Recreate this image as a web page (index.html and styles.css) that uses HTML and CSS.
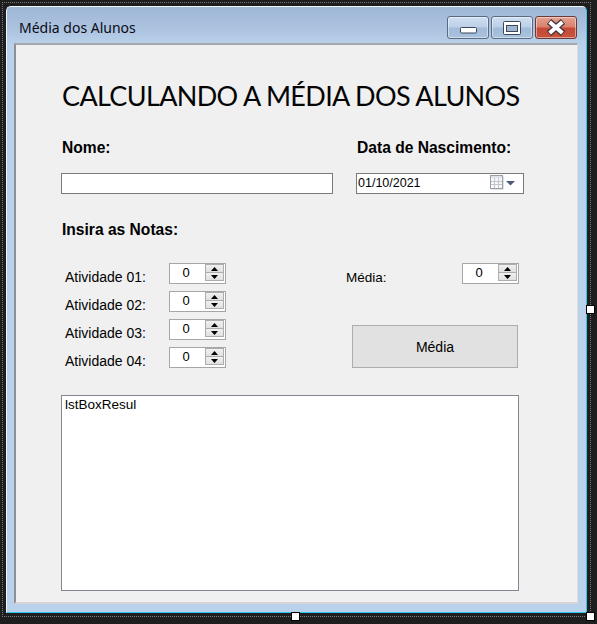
FILE: index.html
```html
<!DOCTYPE html>
<html lang="pt-BR">
<head>
<meta charset="utf-8">
<title>Média dos Alunos</title>
<link rel="stylesheet" href="styles.css">
</head>
<body>
<div class="designer">
  <div class="dotted"></div>
  <div class="window">
    <div class="titlebar">
      <span class="title">Média dos Alunos</span>
      <div class="caption-buttons">
        <div class="cap cap-min">
          <svg class="glyph-min" width="17" height="7" viewBox="0 0 17 7"><rect x="0.5" y="0.5" width="16" height="5.5" rx="1" fill="#fff" stroke="#3b4759"/></svg>
        </div>
        <div class="cap cap-max">
          <svg class="glyph-max" width="18" height="14" viewBox="0 0 18 14"><rect x="0.5" y="0.5" width="17" height="13" rx="1" fill="#fff" stroke="#3b4759"/><rect x="3.5" y="4.5" width="11" height="6" fill="#9fb6d2" stroke="#3b4759"/></svg>
        </div>
        <div class="cap cap-close">
          <svg class="glyph-close" width="20" height="17" viewBox="0 0 20 17"><g stroke="#40333a" stroke-width="6.5"><line x1="3" y1="2.5" x2="17" y2="14.5"/><line x1="17" y1="2.5" x2="3" y2="14.5"/></g><g stroke="#fff" stroke-width="4"><line x1="3.6" y1="3" x2="16.4" y2="14"/><line x1="16.4" y1="3" x2="3.6" y2="14"/></g></svg>
        </div>
      </div>
    </div>
    <div class="client">
      <h1 class="heading">CALCULANDO A MÉDIA DOS ALUNOS</h1>
      <div class="info-row">
        <div class="field">
          <div class="lbl-bold">Nome:</div>
          <div class="textbox"></div>
        </div>
        <div class="field">
          <div class="lbl-bold">Data de Nascimento:</div>
          <div class="datepicker">
            <span class="date-text">01/10/2021</span>
            <svg class="cal-icon" width="14" height="15" viewBox="0 0 14 15">
              <rect x="1.5" y="1.5" width="12" height="13" fill="#bfc3c9"/>
              <rect x="0.5" y="0.5" width="12" height="13" fill="#f7f7f7" stroke="#9a9ea6"/>
              <rect x="1" y="1" width="11" height="2" fill="#dfe3ea"/>
              <g stroke="#c3c6cc"><line x1="4.5" y1="3" x2="4.5" y2="13"/><line x1="8.5" y1="3" x2="8.5" y2="13"/><line x1="1" y1="6.5" x2="12" y2="6.5"/><line x1="1" y1="9.5" x2="12" y2="9.5"/></g>
            </svg>
            <svg class="dd-arrow" width="9" height="5" viewBox="0 0 9 5"><polygon points="0,0 9,0 4.5,4.5" fill="#4b5a76"/></svg>
          </div>
        </div>
      </div>
      <div class="lbl-bold notes-title">Insira as Notas:</div>
      <div class="notes">
        <div class="activities">
          <div class="act-row"><span class="lbl">Atividade 01:</span>
            <div class="spinner"><span class="spin-val">0</span><div class="spin-btns"><div class="spin-btn up"><svg width="7" height="4" viewBox="0 0 7 4"><polygon points="3.5,0 7,4 0,4" fill="#000"/></svg></div><div class="spin-btn down"><svg width="7" height="4" viewBox="0 0 7 4"><polygon points="0,0 7,0 3.5,4" fill="#000"/></svg></div></div></div>
          </div>
          <div class="act-row"><span class="lbl">Atividade 02:</span>
            <div class="spinner"><span class="spin-val">0</span><div class="spin-btns"><div class="spin-btn up"><svg width="7" height="4" viewBox="0 0 7 4"><polygon points="3.5,0 7,4 0,4" fill="#000"/></svg></div><div class="spin-btn down"><svg width="7" height="4" viewBox="0 0 7 4"><polygon points="0,0 7,0 3.5,4" fill="#000"/></svg></div></div></div>
          </div>
          <div class="act-row"><span class="lbl">Atividade 03:</span>
            <div class="spinner"><span class="spin-val">0</span><div class="spin-btns"><div class="spin-btn up"><svg width="7" height="4" viewBox="0 0 7 4"><polygon points="3.5,0 7,4 0,4" fill="#000"/></svg></div><div class="spin-btn down"><svg width="7" height="4" viewBox="0 0 7 4"><polygon points="0,0 7,0 3.5,4" fill="#000"/></svg></div></div></div>
          </div>
          <div class="act-row"><span class="lbl">Atividade 04:</span>
            <div class="spinner"><span class="spin-val">0</span><div class="spin-btns"><div class="spin-btn up"><svg width="7" height="4" viewBox="0 0 7 4"><polygon points="3.5,0 7,4 0,4" fill="#000"/></svg></div><div class="spin-btn down"><svg width="7" height="4" viewBox="0 0 7 4"><polygon points="0,0 7,0 3.5,4" fill="#000"/></svg></div></div></div>
          </div>
        </div>
        <div class="result">
          <div class="act-row"><span class="lbl lbl-media">Média:</span>
            <div class="spinner"><span class="spin-val">0</span><div class="spin-btns"><div class="spin-btn up"><svg width="7" height="4" viewBox="0 0 7 4"><polygon points="3.5,0 7,4 0,4" fill="#000"/></svg></div><div class="spin-btn down"><svg width="7" height="4" viewBox="0 0 7 4"><polygon points="0,0 7,0 3.5,4" fill="#000"/></svg></div></div></div>
          </div>
          <div class="btn">Média</div>
        </div>
      </div>
      <div class="listbox">lstBoxResul</div>
    </div>
  </div>
  <div class="handle handle-right"></div>
  <div class="handle handle-bottom"></div>
  <div class="handle handle-corner"></div>
</div>
</body>
</html>
```
FILE: styles.css
```css
* { box-sizing: border-box; }
html, body { margin: 0; padding: 0; }
body {
  width: 597px;
  height: 624px;
  overflow: hidden;
  background: #1e1e1e;
  font-family: "Liberation Sans", Arial, sans-serif;
  color: #000;
}
.designer {
  position: relative;
  width: 597px;
  height: 624px;
  padding: 6px 0 0 6px;
}
.dotted {
  position: absolute;
  left: 2px;
  top: 2px;
  width: 589px;
  height: 615px;
  border: 1px dotted #7a7a7a;
}
.window {
  position: relative;
  width: 581px;
  height: 607px;
  border-top: 1px solid #f2f6fb;
  border-left: 1px solid #f2f6fb;
  border-right: 1px solid #30c6ef;
  border-bottom: 1px solid #30c6ef;
  border-radius: 5px 5px 0 0;
  background: linear-gradient(#9fb8d6 0px, #aac2de 20px, #b9d1ea 38px, #b9d1ea 100%);
  padding: 0 8px 8px 7px;
  display: flex;
  flex-direction: column;
}
.titlebar {
  height: 36px;
  display: flex;
  align-items: flex-start;
  justify-content: space-between;
}
.title {
  font-family: "Noto Sans", "Open Sans", sans-serif;
  font-size: 14px;
  line-height: 20px;
  margin: 11px 0 0 5px;
  color: #0a0a14;
}
.caption-buttons {
  display: flex;
  gap: 2px;
  margin: 9px 1px 0 0;
}
.cap {
  width: 42px;
  height: 23px;
  border: 1px solid #5a6a82;
  border-radius: 3px;
  box-shadow: inset 0 0 0 1px rgba(255,255,255,0.45);
  display: flex;
  justify-content: center;
  background: linear-gradient(#d0dff1 0%, #bcd0e8 48%, #a2bbd8 52%, #a8c1dd 100%);
}
.cap-close {
  border-color: #6a3a36;
  background: linear-gradient(#e4a392 0%, #d9806b 48%, #c44a35 52%, #c9533c 100%);
}
.glyph-min { margin-top: 10px; }
.glyph-max { margin-top: 4px; }
.glyph-close { margin-top: 2px; }

.client {
  width: 564px;
  height: 561px;
  border-top: 2px solid #a5a8ad;
  border-left: 2px solid #8d9096;
  border-right: 1px solid #dedede;
  border-bottom: 2px solid #d4d4d4;
  background: #f0f0f0;
  padding-left: 45px;
}
.heading {
  margin: 34px 0 0 1px;
  font-family: Lato, "Noto Sans", sans-serif;
  font-weight: 400;
  font-size: 27px;
  line-height: 34px;
  letter-spacing: -0.65px;
  color: #050505;
  white-space: nowrap;
}
.lbl-bold {
  font-weight: 700;
  font-size: 15.6px;
  line-height: 18px;
  padding: 1px 0 0 1px;
  white-space: nowrap;
}
.info-row {
  display: grid;
  grid-template-columns: 272px 168px;
  column-gap: 23px;
  margin-top: 25px;
}
.textbox {
  margin-top: 16px;
  height: 21px;
  background: #fff;
  border: 1px solid #7a7a7a;
}
.datepicker {
  margin-top: 16px;
  height: 21px;
  background: #fff;
  border: 1px solid #7a7a7a;
  display: flex;
  align-items: flex-start;
  padding-left: 1px;
}
.date-text {
  flex: 1;
  font-size: 12.5px;
  line-height: 19px;
}
.cal-icon { margin-top: 1px; }
.dd-arrow { margin: 7px 8px 0 2px; }

.notes-title { margin-top: 26px; }
.notes {
  display: flex;
  margin-top: 24px;
}
.activities {
  width: 165px;
  display: flex;
  flex-direction: column;
  gap: 7px;
}
.result {
  width: 173px;
  margin-left: 120px;
}
.act-row {
  display: flex;
  align-items: flex-start;
  height: 21px;
}
.lbl {
  width: 108px;
  padding: 4px 0 0 4px;
  font-size: 14px;
  line-height: 21px;
  white-space: nowrap;
}
.lbl-media {
  width: 116px;
  padding-left: 0;
  font-size: 13.5px;
}
.spinner {
  width: 57px;
  height: 21px;
  background: #fff;
  border: 1px solid #a6a6a6;
  display: flex;
  align-items: flex-start;
  padding-right: 1px;
}
.spin-val {
  flex: 1;
  text-align: center;
  font-size: 13px;
  line-height: 16px;
  padding: 1px 3px 0 0;
}
.spin-btns {
  width: 19px;
  display: flex;
  flex-direction: column;
}
.spin-btn {
  height: 9px;
  border: 1px solid #adadad;
  background: linear-gradient(#f0f0f0, #e0e0e0);
  display: flex;
  align-items: center;
  justify-content: center;
}
.spin-btn.down {
  height: 8px;
  border-top: none;
}
.btn {
  margin: 41px 0 0 6px;
  width: 166px;
  height: 43px;
  background: #e1e1e1;
  border: 1px solid #adadad;
  display: flex;
  align-items: center;
  justify-content: center;
  font-size: 14px;
}
.listbox {
  margin-top: 27px;
  width: 458px;
  height: 196px;
  background: #fff;
  border: 1px solid #828790;
  padding: 1px 3px;
  font-size: 13.5px;
  line-height: 16px;
}
.handle {
  position: absolute;
  width: 9px;
  height: 9px;
  background: #fff;
  border: 1px solid #000;
}
.handle-right { left: 586px; top: 305px; }
.handle-bottom { left: 291px; top: 612px; }
.handle-corner { left: 586px; top: 612px; }
```
